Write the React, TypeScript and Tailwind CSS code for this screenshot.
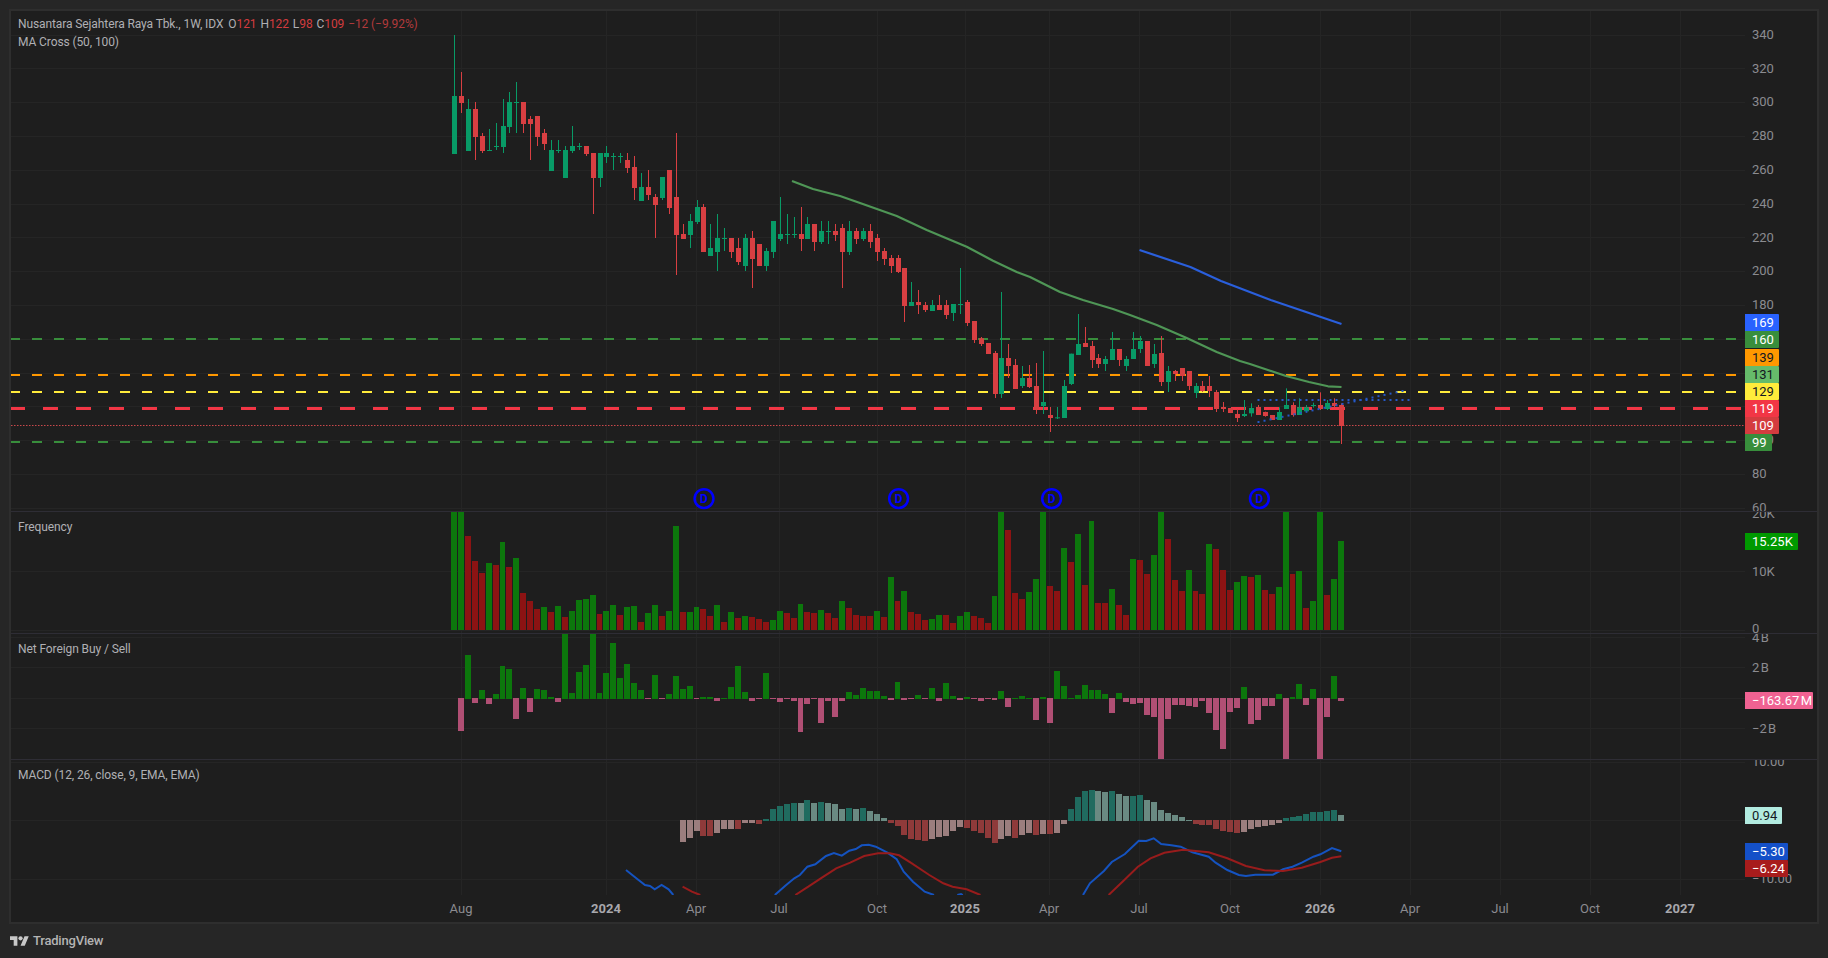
import React from "react";

// [up?, wickTop, bodyTop, bodyBottom, wickBottom] as crop coordinates (px*3)
const c1: number[][] = [
[1,45,228,402,402],[0,156,228,249,279],[1,237,267,393,393],[0,246,267,351,420],[0,339,348,393,399],[1,327,390,393,393],[1,309,378,381,390],[1,237,318,381,399],[1,216,246,321,339],[1,186,246,249,339],
[0,246,246,312,339],[0,288,297,312,420],[0,288,288,351,378],[0,327,339,372,390],[1,360,390,453,453],[1,360,390,393,399],[1,378,390,474,474],[1,318,378,393,399],[1,369,378,381,390],[0,378,378,402,408],
[0,399,399,474,582],[1,399,399,474,501],[1,378,399,411,429],[1,399,408,411,450],[1,399,408,411,429],[0,399,420,444,459],[0,408,441,504,540],[1,459,501,543,543],[0,450,501,525,540],[0,522,531,555,654],
[1,471,471,534,540],[0,450,450,564,582],[0,339,531,645,765],[0,612,642,657,657],[1,582,603,645,684],[1,540,561,606,612],[0,552,561,696,696],[1,612,684,708,708],[1,582,654,696,753],[1,624,654,657,693],
[0,654,654,696,714],[0,654,684,726,735],[1,642,654,738,753],[0,633,654,717,804],[0,672,672,738,738],[1,684,693,738,753],[1,603,603,696,714],[1,531,642,657,663],[1,582,642,645,672],[1,591,642,645,654],
[0,561,642,657,693],[1,591,612,657,657],[0,612,612,666,693],[1,603,633,666,672],[1,603,633,636,672],[0,612,633,645,663],[0,612,624,696,804],[1,603,633,696,705],[0,624,633,657,672]];
const c2: number[][] = [
[1,114,123,147,153],[0,102,123,156,174],[0,132,144,186,213],[0,174,183,207,225],[0,195,204,228,249],[0,195,204,246,249],[0,234,234,348,396],[1,276,336,348,348],[0,300,336,345,372],[0,336,345,360,366],
[1,330,345,363,363],[0,315,345,360,360],[0,330,345,375,387],[1,342,342,369,393],[1,234,342,345,372],[0,330,336,399,408],[0,393,393,450,459],[0,441,445,462,468],[0,459,459,492,492],[0,483,489,612,624],
[1,306,504,612,624],[0,462,504,528,564],[0,507,525,597,597],[1,528,564,588,594],[0,525,564,591,594],[0,519,588,660,672],[1,483,636,648,672],[0,651,675,684,726],[1,651,682,684,687],[1,570,588,684,684],
[1,491,491,582,585],[1,372,462,495,495],[0,411,459,471,471],[0,453,468,510,534],[0,492,504,522,534],[1,498,507,522,543],[1,426,477,510,510],[0,477,477,510,528],[1,498,507,528,543],[1,426,477,507,507],
[1,438,453,477,489],[0,453,453,528,528],[1,462,492,522,534],[0,438,489,576,588],[1,528,543,576,606],[0,540,543,552,573],[0,534,534,558,573],[0,543,543,588,600],[1,579,588,609,624],[0,573,588,603,606],
[0,558,588,603,621],[0,600,606,657,666],[0,636,651,657,666],[0,654,654,669,669],[0,657,672,684,696],[1,630,672,678,681]];
const c3: number[][] = [
[1,460,474,490,500],[0,465,471,495,495],[0,485,486,498,500],[0,495,495,510,510],[1,472,486,510,510],[1,415,465,477,477],[0,457,465,495,500],[1,445,472,495,495],[1,465,472,484,488],[1,458,465,468,473],
[0,427,465,477,480],[1,450,459,477,480],[0,445,459,468,472],[0,460,465,528,582]];
const candles = [
  ...c1.map((c) => [c[0], 20 + c[1] / 3, 20 + c[2] / 3, 20 + c[3] / 3, 20 + c[4] / 3]),
  ...c2.map((c) => [c[0], 190 + c[1] / 3, 190 + c[2] / 3, 190 + c[3] / 3, 190 + c[4] / 3]),
  ...c3.map((c) => [c[0], 250 + c[1] / 3, 250 + c[2] / 3, 250 + c[3] / 3, 250 + c[4] / 3]),
];

// frequency tops, crop y; negative => red
const freq = [36,36,-108,-183,-219,189,-195,126,-201,174,-279,-303,-327,321,-336,318,-351,333,300,297,285,-342,333,315,-345,321,318,-366,339,315,-348,333,78,-336,336,321,-327,-348,315,-366,336,-354,348,-351,-357,-366,360,333,-339,-354,312,-336,-339,330,-339,-354,303,-324,-345,-348,-348,333,-351,231,-303,273,-336,-342,-360,
357,345,-345,-369,348,336,-348,-354,-369,288,36,-90,-279,-297,276,237,36,-258,-273,144,-186,102,-255,63,-309,-309,267,-315,-345,177,-180,-222,165,36,-117,-240,-273,210,-273,-282,132,-147,-210,-270,246,228,-231,225,-270,-282,261,36,-222,213,-324,303,36,-285,237,123];

// net foreign extents, crop y: <595 green up, >595 pink down, 0 none
const net = [0,693,465,609,570,612,582,498,507,657,564,636,567,570,591,606,402,579,516,495,402,579,519,429,534,492,549,570,597,525,597,582,528,567,558,597,591,591,603,594,561,498,576,603,597,519,597,606,597,603,696,612,597,669,603,651,603,576,585,564,573,573,588,600,546,600,597,585,597,
564,603,549,588,600,591,597,603,597,600,573,621,594,588,594,660,591,669,513,558,594,585,555,570,570,582,639,579,606,612,609,645,651,777,657,615,615,618,621,603,639,690,747,636,624,561,672,660,618,618,582,777,591,552,615,567,777,651,528,603];

// macd histogram from k=33, crop y; negative => darker shade
const hist = [246,234,213,-228,-228,219,207,207,-207,189,189,-192,-177,-147,-138,-132,-129,129,-120,129,-126,129,132,147,-144,147,-144,153,162,174,-189,-198,-225,-237,-240,-243,237,231,228,213,201,-204,-213,-219,-234,-249,237,228,-234,225,219,-225,222,-222,219,192,-147,-111,-93,-90,93,96,-93,102,108,-108,-105,120,126,150,159,165,171,180,-192,-195,-195,-207,-213,-216,-219,216,207,201,198,195,189,-174,-171,-168,-162,-156,-156,-153,-150,165];

const macdPt = (pts: number[][]) => pts.map(([x, y]) => `${(650 + x / 2.148).toFixed(1)},${(760 + y / 3).toFixed(1)}`).join(" ");
const blue1 = "626,870 636,878 645,885 " + macdPt([[0,378],[10,388],[25,375],[40,388],[50,405]]);
const blue2 = macdPt([[268,405],[290,378],[310,355],[322,345],[338,320],[355,313],[378,288],[395,279],[412,287],[428,272],[442,267],[455,256],[470,254],[485,260],[510,278],[530,298],[545,335],[565,365],[590,395],[610,405]]);
const blue3 = macdPt([[930,405],[945,370],[975,333],[992,306],[1020,282],[1050,242],[1066,243],[1082,235],[1098,252],[1120,256],[1140,260],[1165,277],[1200,290],[1215,308],[1240,330],[1265,345],[1280,348],[1300,344],[1338,344],[1360,328],[1380,320],[1400,308],[1425,290],[1440,283],[1465,264],[1485,274]]);
const blue4 = macdPt([[660,405],[668,402],[672,405]]);
const red1 = macdPt([[70,380],[90,395],[108,405]]);
const red2 = macdPt([[312,405],[340,380],[370,352],[400,325],[430,308],[460,288],[490,280],[515,280],[535,286],[560,308],[600,345],[630,370],[650,380],[680,388],[710,405]]);
const red3 = macdPt([[985,405],[1015,365],[1048,320],[1075,295],[1105,278],[1145,269],[1200,277],[1240,295],[1280,318],[1320,331],[1360,333],[1400,323],[1440,306],[1465,293],[1485,289]]);

const ma50 = "792,181 813,189 840,196 860,203 896.7,216 926.7,230 966.7,246.7 993,260.7 1016.7,272 1030,277 1060,292 1083,300 1113,309 1130,315 1156.7,325 1186.7,338 1216.7,352 1240,361 1250,364 1286,376 1309,382 1328,386.3 1341.5,387";
const ma100 = "1139.5,250 1190.4,267 1221,281 1270.7,300 1341.5,324";

const times = [461, 606, 696, 779, 877, 965, 1049, 1139, 1230, 1320, 1410, 1500, 1590, 1680];
const timeLabels: [string, number, boolean][] = [["Aug",461,false],["2024",606,true],["Apr",696,false],["Jul",779,false],["Oct",877,false],["2025",965,true],["Apr",1049,false],["Jul",1139,false],["Oct",1230,false],["2026",1320,true],["Apr",1410,false],["Jul",1500,false],["Oct",1590,false],["2027",1680,true]];

const left = (k: number) => Math.round(451 + 6.93 * k);
const ax = (p: number) => 305 + (180 - p) * 1.69;
const priceTicks = [340,320,300,280,260,240,220,200,180,160,140,120,100,80,60];

function VGrid({ y1, y2 }: { y1: number; y2: number }) {
  return (
    <>
      {times.map((x) => (
        <rect key={x} x={x} y={y1} width={1} height={y2 - y1} fill="#252525" />
      ))}
    </>
  );
}
function HGrid({ ys }: { ys: number[] }) {
  return (
    <>
      {ys.map((y) => (
        <rect key={y} x={11} y={Math.round(y)} width={1734} height={1} fill="#252525" />
      ))}
    </>
  );
}

const tickCls = "flex items-center pl-[7px] text-[13px] text-[#8b8b90] whitespace-nowrap";
const tagCls = "h-[17px] leading-[17px] pl-[7px] text-[13px] rounded-r-[1px] whitespace-nowrap";
const titleCls = "h-[17px] leading-[17px] text-[12px] tracking-[-0.1px] text-[#b0b0b4] whitespace-nowrap";

const R = ({ children }: { children: React.ReactNode }) => <span className="text-[#d43c3f]">{children}</span>;

function Separator() {
  return <div className="h-[1px] shrink-0 bg-[#2e2d35]" />;
}

export default function App() {
  const dashes: [number, string, number, string][] = [
    [339, "#388e3c", 2, "10 12"],
    [375, "#ff9800", 2, "10 12"],
    [392, "#ffeb3b", 2, "10 12"],
    [408.5, "#f23645", 3, "15 18"],
    [442, "#388e3c", 2, "10 12"],
  ];
  const dots: number[][] = [];
  for (let x = 1258.5; x < 1411; x += 6) dots.push([x, 400]);
  for (let x = 1258.5; x < 1406; x += 6) dots.push([x, 422 - (x - 1258.5) * 0.215]);

  return (
    <div className="w-[1828px] h-[958px] bg-[#262626] flex flex-col pl-[9px] pr-[9px] pt-[9px] overflow-hidden font-['Roboto',sans-serif]">
      <div className="h-[915px] shrink-0 border-2 border-[#2e2e2e] bg-[#1e1e1e] flex flex-col">
        {/* main pane */}
        <div className="relative h-[500px] shrink-0 flex">
          <svg className="w-[1734px] h-[500px] shrink-0" viewBox="11 11 1734 500">
            <VGrid y1={11} y2={511} />
            <HGrid ys={priceTicks.map(ax)} />
            {dashes.map(([y, col, w, d]) => (
              <line key={y} x1={10} x2={1745} y1={y} y2={y} stroke={col} strokeWidth={w} strokeDasharray={d} />
            ))}
            <line x1={11} x2={1745} y1={425.5} y2={425.5} stroke="#c9484b" strokeWidth={1} strokeDasharray="1.5 1.5" />
            {candles.map((c, i) => {
              const x = left(i);
              const col = c[0] ? "#089a66" : "#d83f42";
              return (
                <g key={i} fill={col}>
                  <rect x={x + 3} y={c[1]} width={1} height={c[4] - c[1]} />
                  <rect x={x + 1} y={c[2]} width={5} height={Math.max(1, c[3] - c[2])} />
                </g>
              );
            })}
            <polyline points={ma50} fill="none" stroke="#4f9656" strokeWidth={2.2} strokeLinejoin="round" />
            <polyline points={ma100} fill="none" stroke="#2a5fdc" strokeWidth={2.2} strokeLinejoin="round" />
            {dots.map(([x, y], i) => (
              <rect key={i} x={x - 1} y={y - 1} width={2} height={2} fill="#2458c8" />
            ))}
            {[704, 898.6, 1051.6, 1259.4].map((x) => (
              <g key={x}>
                <circle cx={x} cy={498.6} r={9.4} fill="none" stroke="#0000ff" strokeWidth={2.5} />
                <text x={x} y={503} textAnchor="middle" fontSize={12} fontWeight={700} fill="#0000ff" fontFamily="Roboto, sans-serif">D</text>
              </g>
            ))}
          </svg>
          <div className="absolute left-[7px] top-[5px] flex flex-col gap-px">
            <div className={`${titleCls} flex gap-[4px]`}>
              <span className="mr-px">Nusantara Sejahtera Raya Tbk., 1W, IDX</span>
              <span>O<R>121</R></span>
              <span>H<R>122</R></span>
              <span>L<R>98</R></span>
              <span>C<R>109</R></span>
              <span className="text-[#b23a3c]">−12 (−9.92%)</span>
            </div>
            <div className={titleCls}>MA Cross (50, 100)</div>
          </div>
          <div className="relative flex-1 overflow-hidden">
            <div className="flex flex-col pt-[6.7px]">
              {priceTicks.map((p) => (
                <div key={p} className={`${tickCls} h-[33.8px] shrink-0`}>{p}</div>
              ))}
            </div>
            <div className="absolute left-0 top-[303px] flex flex-col items-start">
              <div className={`${tagCls} w-[34px] bg-[#2962ff] text-white`}>169</div>
              <div className={`${tagCls} w-[34px] bg-[#388e3c] text-white`}>160</div>
              <div className={`${tagCls} w-[34px] mt-px bg-[#ff9800] text-[#131722]`}>139</div>
              <div className={`${tagCls} w-[34px] bg-[#66bb6a] text-[#131722]`}>131</div>
              <div className={`${tagCls} w-[34px] bg-[#ffeb3b] text-[#131722]`}>129</div>
              <div className={`${tagCls} w-[34px] bg-[#f23645] text-white`}>119</div>
              <div className={`${tagCls} w-[34px] bg-[#d43c3f] text-white`}>109</div>
              <div className={`${tagCls} w-[27px] bg-[#388e3c] text-white`}>99</div>
            </div>
          </div>
        </div>
        <Separator />
        {/* frequency */}
        <div className="relative h-[121px] shrink-0 flex">
          <svg className="w-[1734px] h-[121px] shrink-0" viewBox="11 512 1734 121">
            <VGrid y1={512} y2={633} />
            <HGrid ys={[571, 630]} />
            {freq.map((v, i) => {
              const x = left(i);
              const w = Math.min(6, left(i + 1) - x - 1);
              const y = 500 + Math.abs(v) / 3;
              return <rect key={i} x={x} y={y} width={w} height={630 - y} fill={v > 0 ? "#0c770c" : "#8c1313"} />;
            })}
          </svg>
          <div className={`${titleCls} absolute left-[7px] top-[7px]`}>Frequency</div>
          <div className="relative flex-1 overflow-hidden">
            <div className="absolute left-0 top-[-27px] flex flex-col">
              {["20K", "10K", "0"].map((t) => (
                <div key={t} className={`${tickCls} h-[57.5px] shrink-0`}>{t}</div>
              ))}
            </div>
            <div className={`${tagCls} absolute left-0 top-[21px] w-[53px] bg-[#009900] text-white`}>15.25K</div>
          </div>
        </div>
        <Separator />
        {/* net foreign */}
        <div className="relative h-[125px] shrink-0 flex">
          <svg className="w-[1734px] h-[125px] shrink-0" viewBox="11 634 1734 125">
            <VGrid y1={634} y2={759} />
            <HGrid ys={[637, 667, 698, 728]} />
            {net.map((v, i) => {
              if (!v) return null;
              const x = left(i);
              const w = Math.min(6, left(i + 1) - x - 1);
              const green = v < 595;
              const y = 500 + v / 3;
              return green ? (
                <rect key={i} x={x} y={y} width={w} height={699 - y} fill="#0c770c" />
              ) : (
                <rect key={i} x={x} y={698} width={w} height={y - 698} fill="#b04f74" />
              );
            })}
          </svg>
          <div className={`${titleCls} absolute left-[7px] top-[7px]`}>Net Foreign Buy / Sell</div>
          <div className="relative flex-1 overflow-hidden">
            <div className="absolute left-0 top-[-12px] flex flex-col">
              {["4\u200AB", "2\u200AB", "0", "−2\u200AB"].map((t) => (
                <div key={t} className={`${tickCls} h-[30.6px] shrink-0`}>{t}</div>
              ))}
            </div>
            <div className={`${tagCls} absolute left-0 top-[58px] w-[68px] bg-[#f06292] text-white`}>−163.67{"\u200A"}M</div>
          </div>
        </div>
        <Separator />
        {/* macd */}
        <div className="relative h-[135px] shrink-0 flex">
          <svg className="w-[1734px] h-[135px] shrink-0" viewBox="11 760 1734 135">
            <VGrid y1={760} y2={895} />
            <HGrid ys={[762, 820, 879]} />
            {hist.map((v, i) => {
              const k = i + 33;
              const x = Math.round(451 + 6.93 * k);
              const a = Math.abs(v);
              const pos = a < 181;
              const dark = v < 0;
              const y = 760 + a / 3;
              const fill = pos ? (dark ? "#206b5f" : "#6a8a82") : dark ? "#8f3a3a" : "#9b7e7e";
              return pos ? (
                <rect key={i} x={x} y={y} width={6} height={821 - y} fill={fill} />
              ) : (
                <rect key={i} x={x} y={820} width={6} height={y - 820} fill={fill} />
              );
            })}
            {[blue1, blue2, blue3, blue4].map((p, i) => (
              <polyline key={i} points={p} fill="none" stroke="#1553c0" strokeWidth={2} />
            ))}
            {[red1, red2, red3].map((p, i) => (
              <polyline key={i} points={p} fill="none" stroke="#981c1c" strokeWidth={2} />
            ))}
          </svg>
          <div className={`${titleCls} absolute left-[7px] top-[7px]`}>MACD (12, 26, close, 9, EMA, EMA)</div>
          <div className="relative flex-1 overflow-hidden">
            <div className="absolute left-0 top-[-28px] flex flex-col">
              {["10.00", "0.00", "−10.00"].map((t) => (
                <div key={t} className={`${tickCls} h-[58.5px] shrink-0`}>{t}</div>
              ))}
            </div>
            <div className={`${tagCls} absolute left-0 top-[47px] w-[37px] bg-[#b2ebe0] text-[#131722]`}>0.94</div>
            <div className="absolute left-0 top-[83px] flex flex-col">
              <div className={`${tagCls} w-[43px] bg-[#1450c8] text-white`}>−5.30</div>
              <div className={`${tagCls} w-[43px] bg-[#a81c1c] text-white`}>−6.24</div>
            </div>
          </div>
        </div>
        {/* time axis */}
        <div className="relative flex-1">
          {timeLabels.map(([t, x, b]) => (
            <span
              key={`${t}${x}`}
              className={`absolute top-[6px] -translate-x-1/2 leading-4 text-[13px] ${b ? "font-bold text-[#a8a8ad]" : "text-[#8b8b90]"}`}
              style={{ left: x - 11 }}
            >
              {t}
            </span>
          ))}
        </div>
      </div>
      {/* footer */}
      <div className="flex-1 flex items-center pl-px gap-[4px]">
        <svg width="19" height="15" viewBox="0 0 36 28" fill="#c8c8c8">
          <path d="M14 22H7V11H0V4h14v18zM28 22h-8l7.5-18h8L28 22z" />
          <circle cx="20" cy="8" r="4" />
        </svg>
        <span className="text-[13px] tracking-[-0.2px] font-medium text-[#b4b4b4]">TradingView</span>
      </div>
    </div>
  );
}
